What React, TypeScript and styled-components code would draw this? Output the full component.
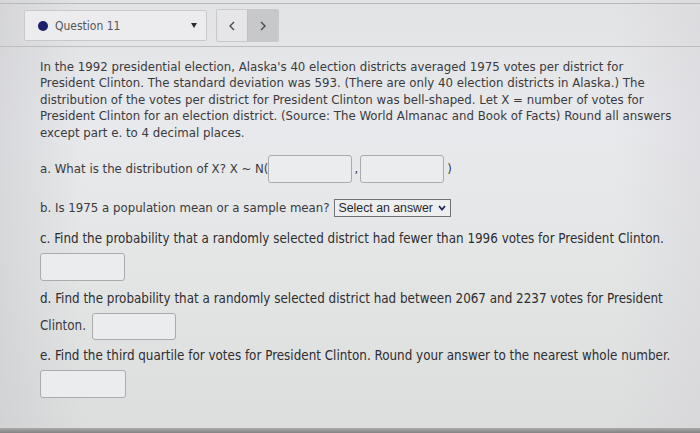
import React from 'react';
import styled, { createGlobalStyle } from 'styled-components';

const GlobalStyle = createGlobalStyle`
  html, body {
    margin: 0;
    padding: 0;
    background: #dcdcdc;
  }
`;

const Page = styled.div`
  width: 700px;
  height: 433px;
  overflow: hidden;
  display: flex;
  flex-direction: column;
  font-family: "DejaVu Sans Condensed", "DejaVu Sans", sans-serif;
  color: #3b3b3e;
  background:
    linear-gradient(90deg, rgba(200, 200, 204, 0.5) 0%, rgba(255, 255, 255, 0) 12%, rgba(255, 255, 255, 0) 88%, rgba(210, 208, 214, 0.4) 100%),
    linear-gradient(180deg, #e2e3e5 0%, #e8e9ec 30%, #e4e6e6 60%, #dcdddd 100%);
`;

const TopRule = styled.div`
  height: 3px;
  border-bottom: 1px solid #b9b9bc;
`;

const Toolbar = styled.div`
  display: flex;
  align-items: center;
  gap: 9px;
  padding: 5px 0 4px 24px;
  height: 33px;
  border-bottom: 1px solid #bdbdc0;
`;

const QuestionPicker = styled.div`
  width: 183px;
  height: 31px;
  box-sizing: border-box;
  border: 1px solid #c9c9cc;
  border-radius: 2px;
  background: #ececee;
  display: flex;
  align-items: center;
  padding: 0 9px 0 13px;
  font-size: 12px;
  color: #555558;
`;

const Dot = styled.span`
  width: 10px;
  height: 10px;
  border-radius: 50%;
  background: #1c1f6e;
  margin-right: 7px;
`;

const Caret = styled.span`
  margin-left: auto;
  width: 0;
  height: 0;
  border-left: 3.5px solid transparent;
  border-right: 3.5px solid transparent;
  border-top: 5px solid #2c2c2e;
`;

const NavGroup = styled.div`
  display: flex;
  height: 31px;
  border: 1px solid #c9c9cc;
  border-radius: 2px;
  overflow: hidden;
`;

const NavButton = styled.div<{ $active?: boolean }>`
  width: 30px;
  display: flex;
  align-items: center;
  justify-content: center;
  background: ${(p) => (p.$active ? '#c6c8ca' : '#e6e6e9')};
  border-left: ${(p) => (p.$active ? '1px solid #c0c0c3' : 'none')};
`;

const Content = styled.div`
  padding: 12px 0 0 40px;
  font-size: 13.1px;
  line-height: 16.4px;
`;

const Intro = styled.p`
  margin: 0;
  white-space: nowrap;
`;

const Row = styled.div<{ $top: number; $size?: number }>`
  display: flex;
  align-items: center;
  margin-top: ${(p) => p.$top}px;
  font-size: ${(p) => p.$size ?? 13.1}px;
  white-space: nowrap;
`;

const Line = styled.div<{ $top: number }>`
  margin-top: ${(p) => p.$top}px;
  font-size: 13.3px;
  color: #2e2e31;
  white-space: nowrap;
`;

const AnswerBox = styled.div<{ $w: number; $h: number; $top?: number }>`
  width: ${(p) => p.$w}px;
  height: ${(p) => p.$h}px;
  margin-top: ${(p) => p.$top ?? 0}px;
  box-sizing: border-box;
  border: 1px solid #a9abae;
  border-radius: 3px;
  background: #eaecee;
`;

const SelectBox = styled.div`
  display: flex;
  align-items: center;
  gap: 5px;
  height: 18px;
  box-sizing: border-box;
  margin-left: 4px;
  padding: 0 4px;
  border: 1px solid #707276;
  background: #eceef0;
  font-family: "Liberation Sans", Arial, sans-serif;
  font-size: 12.3px;
  color: #2a2a2c;
`;

const Gap = styled.span<{ $w: number }>`
  display: inline-block;
  width: ${(p) => p.$w}px;
`;

const BottomStrip = styled.div`
  margin-top: auto;
  height: 5px;
  background: linear-gradient(180deg, #a9a9aa, #838384);
`;

const Chevron = ({ dir }: { dir: 'left' | 'right' }) => (
  <svg width="8" height="10" viewBox="0 0 8 10">
    <path
      d={dir === 'left' ? 'M6 1 L2 5 L6 9' : 'M2 1 L6 5 L2 9'}
      fill="none"
      stroke="#4a4a4e"
      strokeWidth="1.4"
    />
  </svg>
);

const SmallChevron = () => (
  <svg width="8" height="6" viewBox="0 0 8 6">
    <path d="M1 1 L4 4.5 L7 1" fill="none" stroke="#1f2a5a" strokeWidth="1.8" />
  </svg>
);

export default function App() {
  return (
    <Page>
      <GlobalStyle />
      <TopRule />
      <Toolbar>
        <QuestionPicker>
          <Dot />
          Question 11
          <Caret />
        </QuestionPicker>
        <NavGroup>
          <NavButton>
            <Chevron dir="left" />
          </NavButton>
          <NavButton $active>
            <Chevron dir="right" />
          </NavButton>
        </NavGroup>
      </Toolbar>
      <Content>
        <Intro>
          In the 1992 presidential election, Alaska's 40 election districts averaged 1975 votes per district for
          <br />
          President Clinton. The standard deviation was 593. (There are only 40 election districts in Alaska.) The
          <br />
          distribution of the votes per district for President Clinton was bell-shaped. Let X = number of votes for
          <br />
          President Clinton for an election district. (Source: The World Almanac and Book of Facts) Round all answers
          <br />
          except part e. to 4 decimal places.
        </Intro>
        <Row $top={14}>
          a. What is the distribution of X? X ~ N(
          <AnswerBox $w={84} $h={28} />
          <Gap $w={2} />,<Gap $w={2} />
          <AnswerBox $w={84} $h={28} />
          <Gap $w={3} />)
        </Row>
        <Row $top={16}>
          b. Is 1975 a population mean or a sample mean?
          <SelectBox>
            Select an answer <SmallChevron />
          </SelectBox>
        </Row>
        <Line $top={14}>
          c. Find the probability that a randomly selected district had fewer than 1996 votes for President Clinton.
        </Line>
        <AnswerBox $w={85} $h={28} $top={6} />
        <Line $top={10}>
          d. Find the probability that a randomly selected district had between 2067 and 2237 votes for President
        </Line>
        <Row $top={5} $size={13.3}>
          Clinton.
          <Gap $w={6} />
          <AnswerBox $w={84} $h={27} />
        </Row>
        <Line $top={8}>
          e. Find the third quartile for votes for President Clinton. Round your answer to the nearest whole number.
        </Line>
        <AnswerBox $w={86} $h={28} $top={6} />
      </Content>
      <BottomStrip />
    </Page>
  );
}
